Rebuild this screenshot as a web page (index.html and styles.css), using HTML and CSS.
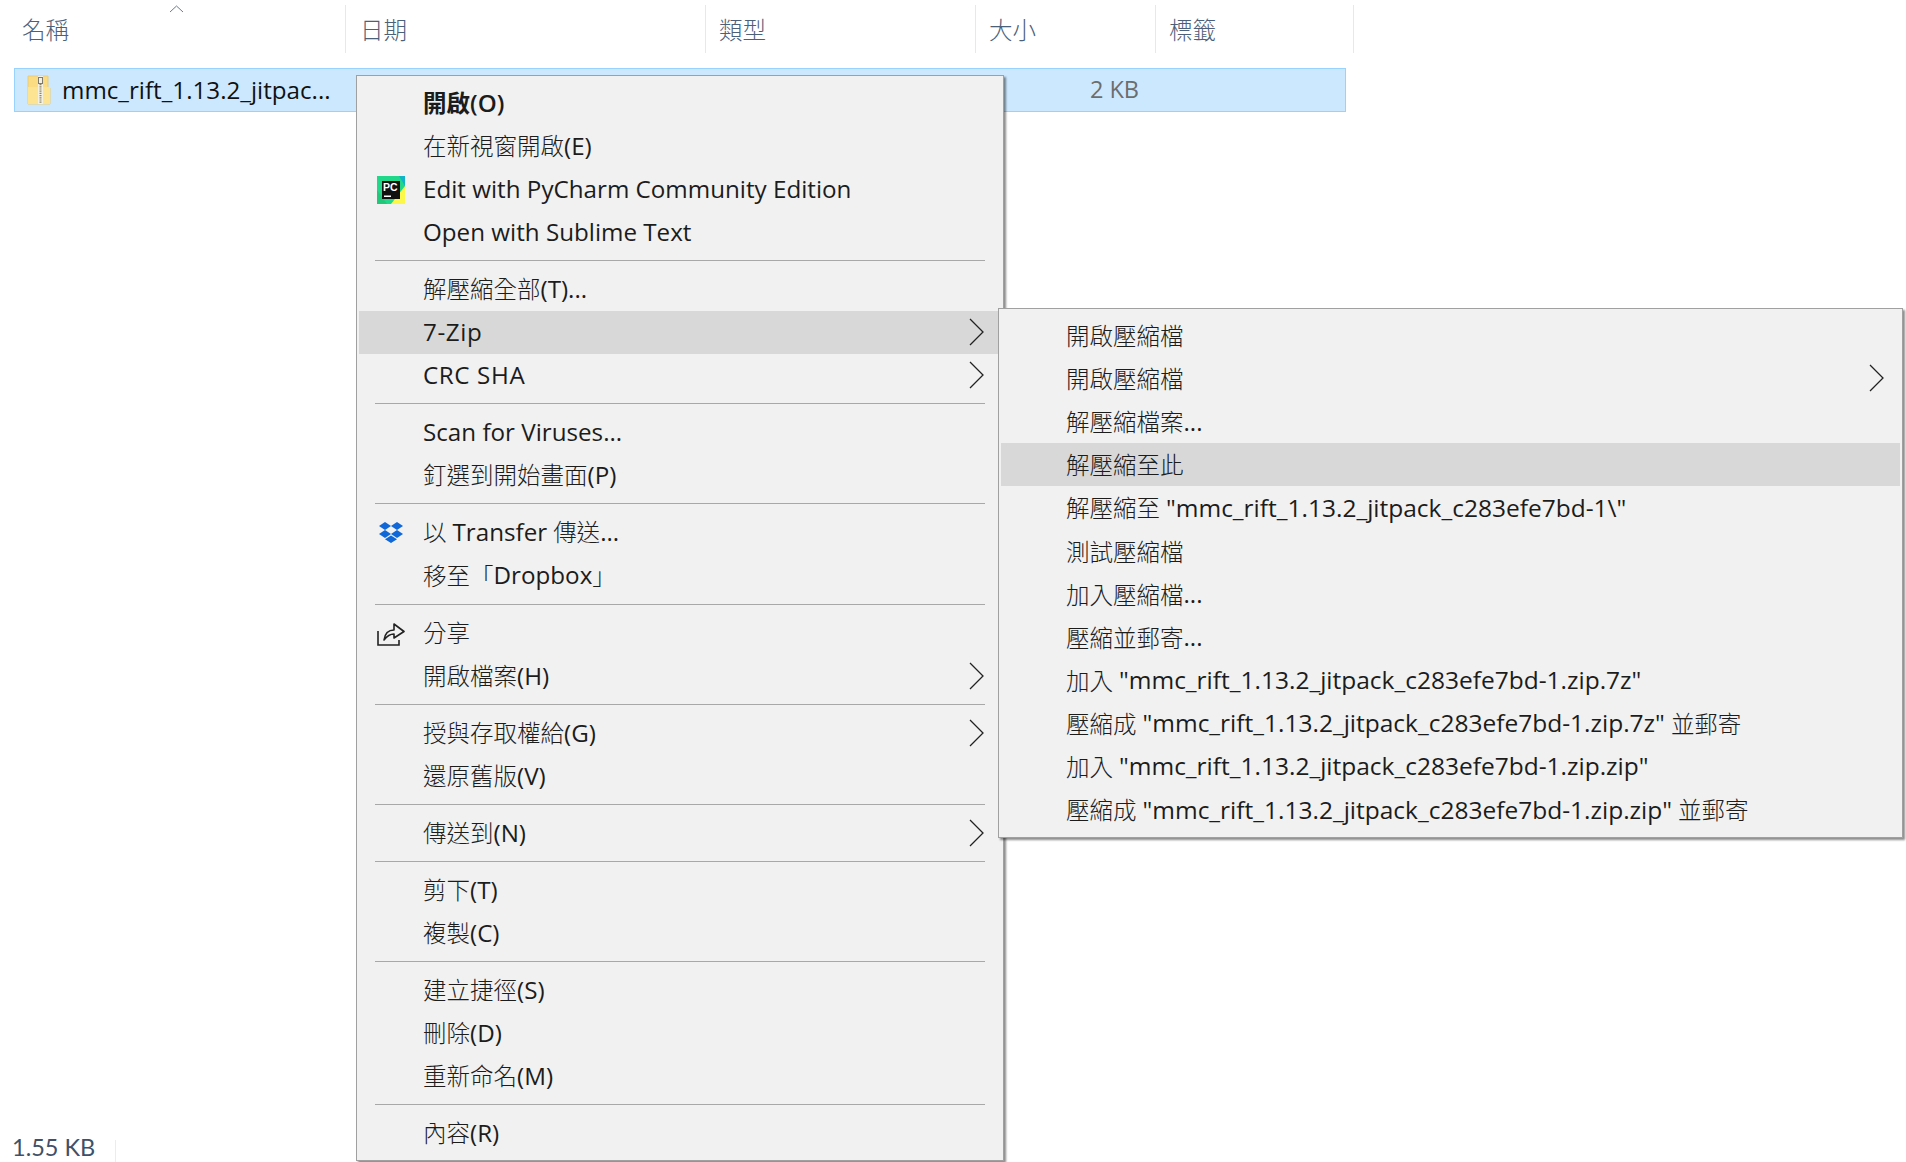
FILE: index.html
```html
<!DOCTYPE html>
<html lang="zh-Hant">
<head>
<meta charset="utf-8">
<title>Explorer</title>
<link rel="stylesheet" href="styles.css">
</head>
<body>
<div class="explorer">
  <div class="header">
    <div class="col col-name">名稱<svg class="sort" width="15" height="8" viewBox="0 0 15 8"><path d="M1 7L7.5 1L14 7" fill="none" stroke="#6d7a8a" stroke-width="1"/></svg></div>
    <div class="col col-date">日期</div>
    <div class="col col-type">類型</div>
    <div class="col col-size">大小</div>
    <div class="col col-tag">標籤</div>
  </div>
  <div class="file">
    <svg class="zip" width="24" height="30" viewBox="0 0 24 30"><path d="M1 1H21V13H23V29H1Z" fill="#fcdc82" stroke="#e9cc78"/><path d="M1 12H23V29H1Z" fill="#fde492"/><rect x="11" y="1" width="5" height="28" fill="#f4f0e2"/><path d="M13.500 9V28" stroke="#8a8468" stroke-width="2" stroke-dasharray="1.2 1"/><rect x="11.500" y="2.500" width="4" height="6" fill="none" stroke="#7b7b70"/></svg>
    <span class="file-name">mmc_rift_1.13.2_jitpac...</span>
    <span class="file-size">2 KB</span>
  </div>
  <div class="status"><span class="status-text">1.55 KB</span><span class="status-div"></span></div>
</div>

<div class="menu main-menu">
  <div class="item bold"><span class="slot"></span>開啟<span class="la">(O)</span></div>
  <div class="item"><span class="slot"></span>在新視窗開啟<span class="la">(E)</span></div>
  <div class="item"><span class="slot"><svg width="28" height="28" viewBox="0 0 28 28"><rect width="28" height="28" fill="#21d789"/><path d="M0 0H28V10L22 0Z" fill="#11b3c9"/><path d="M28 10V28H14Z" fill="#fcf84a"/><path d="M0 14V28H10Z" fill="#21c879"/><rect x="5" y="5" width="18" height="18" fill="#111"/><text class="pc" x="6" y="15">PC</text><rect x="7" y="19.500" width="7" height="1.500" fill="#fff"/></svg></span><span class="la">Edit with PyCharm Community Edition</span></div>
  <div class="item"><span class="slot"></span><span class="la">Open with Sublime Text</span></div>
  <div class="sep"></div>
  <div class="item"><span class="slot"></span>解壓縮全部<span class="la">(T)...</span></div>
  <div class="item active"><span class="slot"></span><span class="la wide">7-Zip</span><svg class="chev" width="15" height="28" viewBox="0 0 15 28"><path d="M1 1L14 14L1 27" fill="none" stroke="#222" stroke-width="1.300"/></svg></div>
  <div class="item"><span class="slot"></span><span class="la wide">CRC SHA</span><svg class="chev" width="15" height="28" viewBox="0 0 15 28"><path d="M1 1L14 14L1 27" fill="none" stroke="#222" stroke-width="1.300"/></svg></div>
  <div class="sep"></div>
  <div class="item"><span class="slot"></span><span class="la">Scan for Viruses...</span></div>
  <div class="item"><span class="slot"></span>釘選到開始畫面<span class="la">(P)</span></div>
  <div class="sep"></div>
  <div class="item"><span class="slot"><svg width="24" height="21" viewBox="0 0 24 21"><path d="M6 0L12 4L6 8L0 4ZM18 0L24 4L18 8L12 4ZM6 8L12 12L6 16L0 12ZM18 8L24 12L18 16L12 12ZM12 13.500L18 17.300L12 21L6 17.300Z" fill="#0f67d8"/></svg></span>以<span class="la space">Transfer</span>傳送<span class="la">...</span></div>
  <div class="item tall"><span class="slot"></span>移至「<span class="la">Dropbox</span>」</div>
  <div class="sep"></div>
  <div class="item"><span class="slot"><svg width="28" height="24" viewBox="0 0 28 24"><path d="M1 9V23H22V18" fill="none" stroke="#222" stroke-width="1.600"/><path d="M7 18C8 11 12 8 17 8V2L27 9.500L17 16V12C13 12 10 14 7 18Z" fill="none" stroke="#222" stroke-width="1.600" stroke-linejoin="round"/></svg></span>分享</div>
  <div class="item"><span class="slot"></span>開啟檔案<span class="la">(H)</span><svg class="chev" width="15" height="28" viewBox="0 0 15 28"><path d="M1 1L14 14L1 27" fill="none" stroke="#222" stroke-width="1.300"/></svg></div>
  <div class="sep"></div>
  <div class="item"><span class="slot"></span>授與存取權給<span class="la">(G)</span><svg class="chev" width="15" height="28" viewBox="0 0 15 28"><path d="M1 1L14 14L1 27" fill="none" stroke="#222" stroke-width="1.300"/></svg></div>
  <div class="item"><span class="slot"></span>還原舊版<span class="la">(V)</span></div>
  <div class="sep"></div>
  <div class="item"><span class="slot"></span>傳送到<span class="la">(N)</span><svg class="chev" width="15" height="28" viewBox="0 0 15 28"><path d="M1 1L14 14L1 27" fill="none" stroke="#222" stroke-width="1.300"/></svg></div>
  <div class="sep"></div>
  <div class="item"><span class="slot"></span>剪下<span class="la">(T)</span></div>
  <div class="item"><span class="slot"></span>複製<span class="la">(C)</span></div>
  <div class="sep"></div>
  <div class="item"><span class="slot"></span>建立捷徑<span class="la">(S)</span></div>
  <div class="item"><span class="slot"></span>刪除<span class="la">(D)</span></div>
  <div class="item"><span class="slot"></span>重新命名<span class="la">(M)</span></div>
  <div class="sep"></div>
  <div class="item"><span class="slot"></span>內容<span class="la">(R)</span></div>
</div>

<div class="menu sub-menu">
  <div class="item"><span class="slot"></span>開啟壓縮檔</div>
  <div class="item"><span class="slot"></span>開啟壓縮檔<svg class="chev" width="15" height="28" viewBox="0 0 15 28"><path d="M1 1L14 14L1 27" fill="none" stroke="#222" stroke-width="1.300"/></svg></div>
  <div class="item"><span class="slot"></span>解壓縮檔案<span class="la">...</span></div>
  <div class="item active"><span class="slot"></span>解壓縮至此</div>
  <div class="item"><span class="slot"></span>解壓縮至<span class="fn">"mmc_rift_1.13.2_jitpack_c283efe7bd-1\"</span></div>
  <div class="item"><span class="slot"></span>測試壓縮檔</div>
  <div class="item"><span class="slot"></span>加入壓縮檔<span class="la">...</span></div>
  <div class="item"><span class="slot"></span>壓縮並郵寄<span class="la">...</span></div>
  <div class="item"><span class="slot"></span>加入<span class="fn">"mmc_rift_1.13.2_jitpack_c283efe7bd-1.zip.7z"</span></div>
  <div class="item"><span class="slot"></span>壓縮成<span class="fn">"mmc_rift_1.13.2_jitpack_c283efe7bd-1.zip.7z"</span><span class="after">並郵寄</span></div>
  <div class="item"><span class="slot"></span>加入<span class="fn">"mmc_rift_1.13.2_jitpack_c283efe7bd-1.zip.zip"</span></div>
  <div class="item"><span class="slot"></span>壓縮成<span class="fn">"mmc_rift_1.13.2_jitpack_c283efe7bd-1.zip.zip"</span><span class="after">並郵寄</span></div>
</div>
</body>
</html>
```
FILE: styles.css
```css
* { box-sizing: border-box; }
html, body { margin: 0; height: 100%; background: #fff; overflow: hidden; }
body {
  font-family: "Noto Sans CJK TC", "Open Sans", sans-serif;
  font-size: 23.5px;
  font-weight: 300;
  color: #1c1c1c;
}
.la, .fn, .file-name, .file-size { font-family: "Open Sans", "Noto Sans CJK TC", sans-serif; font-weight: 400; }
.la { font-size: 24.2px; }
.la.wide { letter-spacing: .6px; }
.la.space { margin: 0 6px; }
.fn { font-size: 24.5px; margin-left: 6px; }
.after { margin-left: 6px; }
.explorer { display: flex; flex-direction: column; height: 1162px; }
.header { display: flex; height: 56px; padding-top: 5px; color: #4c607a; }
.col {
  position: relative;
  display: flex;
  align-items: center;
  height: 48px;
  border-right: 1px solid #e8e8e8;
  padding-left: 14px;
}
.col-name { width: 346px; padding-left: 22px; }
.col-date { width: 360px; }
.col-type { width: 270px; padding-left: 13px; }
.col-size { width: 180px; padding-left: 13px; }
.col-tag { width: 198px; padding-left: 13px; }
.sort { position: absolute; left: 169px; top: 0; }
.file {
  display: flex;
  align-items: center;
  height: 44px;
  width: 1332px;
  margin: 12px 0 0 14px;
  padding: 0 206px 2px 12px;
  background: #cce8ff;
  border: 1px solid #99d1ff;
}
.zip { flex: none; margin-right: 11px; margin-top: 2px; }
.file-name { flex: 1; font-size: 24.2px; color: #111; }
.file-size { color: #6d6d6d; }
.status { margin-top: auto; display: flex; height: 29px; color: #3f5068; }
.status-text { width: 115px; padding-left: 12px; font-family: Lato, "Open Sans", sans-serif; font-size: 23.5px; font-weight: 400; line-height: 29px; }
.status-div { width: 1px; height: 22px; margin-top: 7px; background: #ececec; }
.menu {
  position: absolute;
  background: #f1f1f1;
  border: 1px solid #a0a0a0;
  box-shadow: 2px 2px 2px rgba(0, 0, 0, .45);
}
.main-menu { left: 356px; top: 75px; width: 648px; height: 1086px; padding: 6px 2px; }
.sub-menu { left: 998px; top: 308px; width: 905px; height: 530px; padding: 5px 2px; }
.item { display: flex; align-items: center; height: 43px; padding: 0 17px 3px 0; white-space: nowrap; }
.item.tall { height: 44px; }
.sub-menu .item { height: 43.1px; padding: 0 16px 1px 0; }
.slot { flex: none; width: 64px; display: flex; justify-content: center; align-items: center; }
.slot svg { margin-top: 3px; }
.sub-menu .slot { width: 65px; }
.active { background: #d8d8d8; }
.bold { font-weight: 700; }
.bold .la { font-weight: 600; }
.chev { margin-left: auto; flex: none; margin-top: 1px; }
.sub-menu .chev { margin-top: 0; }
.sep { height: 1px; margin: 6px 16px 7px; background: #a8a8a8; }
.pc { font: 700 10.500px "Liberation Sans", sans-serif; fill: #fff; }
```
